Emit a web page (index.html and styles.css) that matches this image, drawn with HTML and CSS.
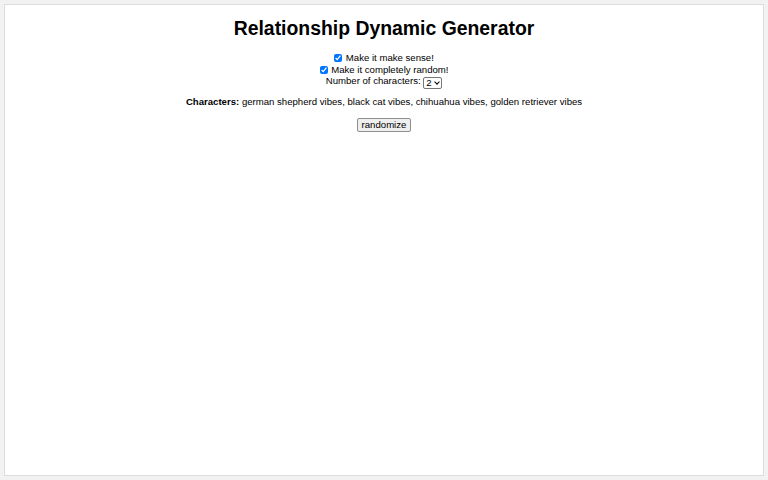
FILE: index.html
```html
<!DOCTYPE html>
<html>
  <head>
    <title>Relationship Dynamic Generator</title>
    <link rel="stylesheet" href="styles.css">
  </head>
  <body>
    <div class="container">
      <h1>Relationship Dynamic Generator</h1>
      <div class="options">
        <label><input type="checkbox" id="make-sense" checked /> Make it make sense!</label>
        <label><input type="checkbox" id="random" checked /> Make it completely random!</label>
        <label>Number of characters:
          <span class="select-wrap">
            <select id="count">
              <option value="2">2</option>
              <option value="3">3</option>
              <option value="4">4</option>
            </select>
          </span>
        </label>
      </div>
      <p class="characters"><b>Characters:</b> <span id="character-list">german shepherd vibes, black cat vibes, chihuahua vibes, golden retriever vibes</span></p>
      <button id="randomize" class="custom-button">randomize</button>
    </div>
  </body>
</html>
```

FILE: styles.css
```css
body {
  margin: 0;
  padding: 4px;
  font-family: "Liberation Sans", Arial, sans-serif;
  font-size: 9.6px;
  background-color: #f2f2f2;
}

.container {
  height: 470px;
  background-color: #fff;
  border: 1px solid #dcdcdc;
  text-align: center;
}

h1 {
  margin: 12px 0 12px;
  font-size: 19.4px;
  color: #000;
}

.options {
  display: flex;
  flex-direction: column;
  align-items: center;
  line-height: 11.5px;
}

.options label {
  height: 11.5px;
}

.options input[type="checkbox"] {
  width: 8px;
  height: 8px;
  margin: 0 1px 0 0;
  vertical-align: -1px;
}

.select-wrap {
  position: relative;
  display: inline-block;
  vertical-align: -2px;
}

.select-wrap select {
  appearance: none;
  display: block;
  width: 19px;
  height: 12px;
  margin: 0;
  padding: 0 0 0 2px;
  font-family: "Liberation Sans", Arial, sans-serif;
  font-size: 9.6px;
  line-height: 10px;
  color: #000;
  background-color: #fff;
  border: 1px solid #767676;
  border-radius: 2px;
}

/* little chevron on the right of the dropdown */
.select-wrap::after {
  content: "";
  position: absolute;
  right: 3px;
  top: 3px;
  width: 3px;
  height: 3px;
  border-right: 1.2px solid #000;
  border-bottom: 1.2px solid #000;
  transform: rotate(45deg);
  pointer-events: none;
}

.characters {
  margin: 9px 0 11px;
}

.custom-button {
  font-family: "Liberation Sans", Arial, sans-serif;
  font-size: 9.6px;
  height: 14px;
  padding: 0 4px;
  border: 1px solid #8f8f8f;
  border-radius: 2px;
  background-color: #efefef;
}
```
